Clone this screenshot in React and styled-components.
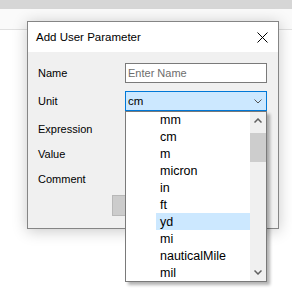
import React from 'react';
import styled, { createGlobalStyle } from 'styled-components';

const Global = createGlobalStyle`
  body {
    margin: 0;
    background: #ffffff;
    font-family: "Liberation Sans", Arial, sans-serif;
  }
`;

const Page = styled.div`
  position: relative;
  width: 292px;
  height: 301px;
  overflow: hidden;
  background: #ffffff;
`;

const TopStrip = styled.div`
  height: 9px;
  background: #d6d6d6;
`;

const Toolbar = styled.div`
  height: 20px;
  background: #fafafa;
  border-bottom: 1px solid #e0e0e0;
`;

const Dialog = styled.div`
  position: absolute;
  left: 27px;
  top: 21px;
  width: 252px;
  height: 208px;
  box-sizing: border-box;
  border: 1px solid #858585;
  background: #f0f0f0;
  box-shadow: 0 2px 14px rgba(0, 0, 0, 0.22);
`;

const TitleBar = styled.div`
  height: 30px;
  background: #ffffff;
  display: flex;
  align-items: center;
  justify-content: space-between;
  padding: 0 10px 0 8px;
  font-size: 11.5px;
  color: #000;
`;

const Body = styled.div`
  display: flex;
  flex-direction: column;
  padding: 11px 0 0 10px;
`;

const Row = styled.div`
  display: grid;
  grid-template-columns: 87px 142px;
  align-items: center;
  height: ${p => p.$h || 20}px;
  margin-top: ${p => p.$mt || 0}px;
`;

const Label = styled.span`
  font-size: 11px;
  color: #000;
`;

const TextBox = styled.div`
  height: 20px;
  box-sizing: border-box;
  border: 1px solid #7a7a7a;
  background: #fff;
  display: flex;
  align-items: center;
  padding-left: 2px;
  font-size: 11px;
  color: #6d6d6d;
`;

const Combo = styled.div`
  height: 20px;
  box-sizing: border-box;
  border: 1px solid #0078d7;
  background: #cce8ff;
  display: flex;
  align-items: center;
  justify-content: space-between;
  padding: 0 4px 0 2px;
  font-size: 11.5px;
  color: #000;
`;

const Button = styled.div`
  margin-left: 74px;
  width: 75px;
  height: 21px;
  box-sizing: border-box;
  background: #cccccc;
  border: 1px solid #b8b8b8;
`;

const List = styled.div`
  position: absolute;
  left: 125px;
  top: 111px;
  width: 142px;
  height: 171px;
  box-sizing: border-box;
  border: 1px solid #7a7a7a;
  background: #fff;
  display: flex;
  box-shadow: 3px 3px 3px rgba(0, 0, 0, 0.3);
`;

const Items = styled.div`
  flex: 1;
  display: flex;
  flex-direction: column;
`;

const Item = styled.div`
  height: 17px;
  margin-left: 30px;
  padding-left: 4px;
  display: flex;
  align-items: center;
  font-size: 12.5px;
  color: #000;
  background: ${p => (p.$active ? '#cce8ff' : 'transparent')};
`;

const ScrollBar = styled.div`
  width: 16px;
  background: #f0f0f0;
  display: flex;
  flex-direction: column;
  justify-content: space-between;
  position: relative;
`;

const Arrow = styled.div`
  height: 17px;
  display: flex;
  align-items: center;
  justify-content: center;
`;

const Thumb = styled.div`
  position: absolute;
  left: 0;
  right: 0;
  top: 21px;
  height: 29px;
  background: #cdcdcd;
`;

const Chevron = ({ up, color = '#606060', w = 1.5 }) => (
  <svg width="8" height="5" viewBox="0 0 8 5">
    <path
      d={up ? 'M0.5 4.5 L4 1 L7.5 4.5' : 'M0.5 0.5 L4 4 L7.5 0.5'}
      fill="none"
      stroke={color}
      strokeWidth={w}
    />
  </svg>
);

const units = ['mm', 'cm', 'm', 'micron', 'in', 'ft', 'yd', 'mi', 'nauticalMile', 'mil'];

export default function App() {
  return (
    <Page>
      <Global />
      <TopStrip />
      <Toolbar />
      <Dialog>
        <TitleBar>
          <span>Add User Parameter</span>
          <svg width="11" height="11" viewBox="0 0 11 11">
            <path d="M0.5 0.5 L10.5 10.5 M10.5 0.5 L0.5 10.5" stroke="#000" strokeWidth="1" />
          </svg>
        </TitleBar>
        <Body>
          <Row>
            <Label>Name</Label>
            <TextBox>Enter Name</TextBox>
          </Row>
          <Row $mt={8}>
            <Label>Unit</Label>
            <Combo>
              <span>cm</span>
              <Chevron color="#555" w={1} />
            </Combo>
          </Row>
          <Row $mt={8}>
            <Label>Expression</Label>
          </Row>
          <Row $mt={5}>
            <Label>Value</Label>
          </Row>
          <Row $mt={5}>
            <Label>Comment</Label>
          </Row>
          <Row $mt={6} $h={21}>
            <Button />
          </Row>
        </Body>
      </Dialog>
      <List>
        <Items>
          {units.map(u => (
            <Item key={u} $active={u === 'yd'}>{u}</Item>
          ))}
        </Items>
        <ScrollBar>
          <Arrow><Chevron up /></Arrow>
          <Thumb />
          <Arrow><Chevron /></Arrow>
        </ScrollBar>
      </List>
    </Page>
  );
}
